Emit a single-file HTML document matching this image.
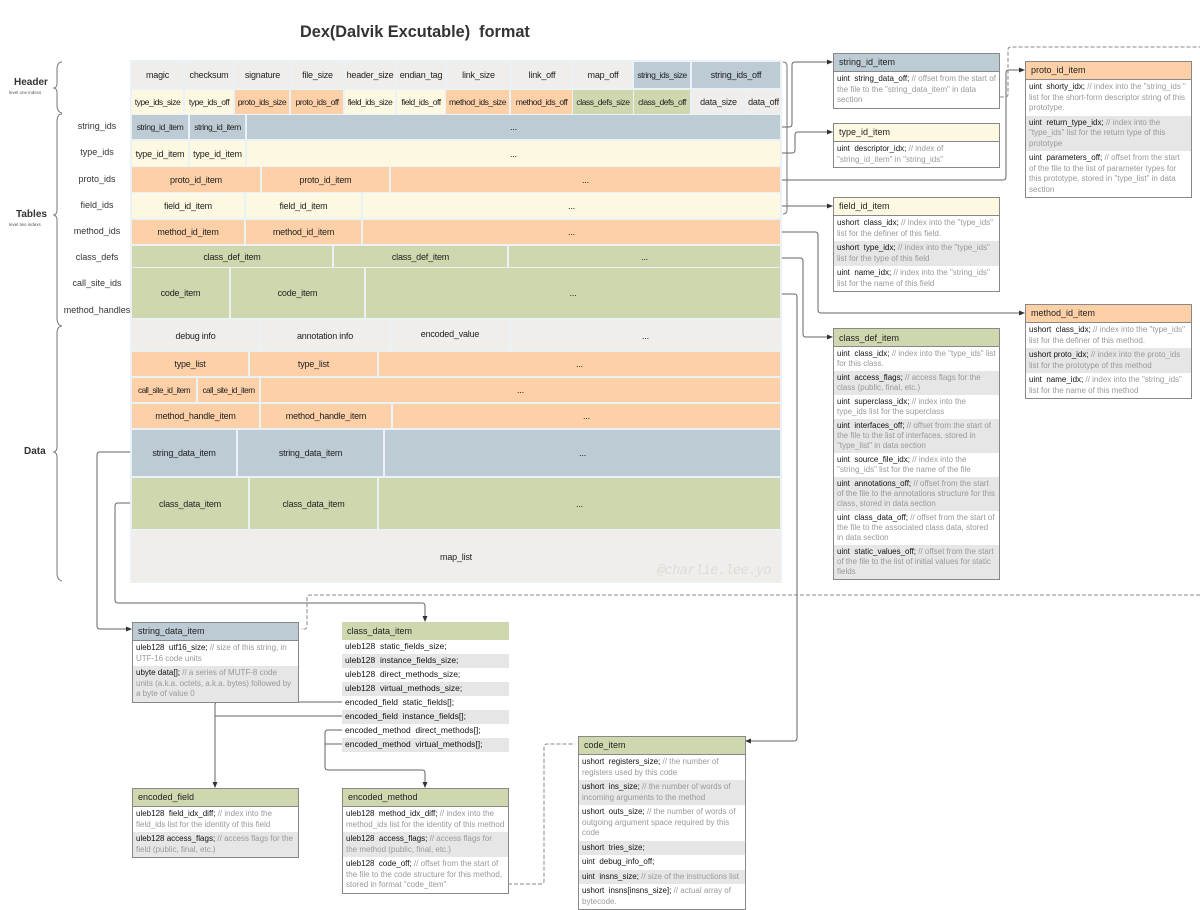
<!DOCTYPE html>
<html><head><meta charset="utf-8"><style>
*{box-sizing:border-box;margin:0;padding:0}
body{width:1200px;height:909px;background:#fff;position:relative;overflow:hidden;font-family:"Liberation Sans",sans-serif;color:#222}
.c{position:absolute;display:flex;align-items:center;justify-content:center;font-size:9px;white-space:nowrap;overflow:hidden;letter-spacing:-0.2px}
.n{letter-spacing:-0.5px;font-size:8.6px}
.g{background:#efeeea}.b{background:#bccbd4}.y{background:#fdf8e1}.p{background:#fdd0a8}.v{background:#cfd7ae}
.l{position:absolute;font-size:9px;color:#333;width:80px;text-align:center}
.box{position:absolute;border:1px solid #888;background:#fff;font-size:8px;line-height:10.5px}
.box .h{height:18px;padding-left:5px;font-size:9px;display:flex;align-items:center;border-bottom:1px solid #888;color:#222}
.box .r{padding:2px 3px;color:#999}
.box .r b{font-weight:normal;color:#111}
.box .s{padding:1px 3px;color:#111;font-size:8.5px;height:14px}
</style></head><body>
<div style="position:absolute;left:300px;top:23px;font-size:16.3px;font-weight:bold;color:#333">Dex(Dalvik Excutable)&nbsp; format</div>

<div style="position:absolute;left:14px;top:77px;font-size:10px;font-weight:bold;color:#333">Header</div>
<div style="position:absolute;left:9px;top:90px;font-size:4.5px;color:#555">level one indexs</div>
<div style="position:absolute;left:16px;top:209px;font-size:10px;font-weight:bold;color:#333">Tables</div>
<div style="position:absolute;left:9px;top:222px;font-size:4.5px;color:#555">level two indexs</div>
<div style="position:absolute;left:24px;top:446px;font-size:10px;font-weight:bold;color:#333">Data</div>

<svg style="position:absolute;left:0;top:0" width="1200" height="909">
<g fill="none" stroke="#777" stroke-width="1">
<path d="M62 62 Q57 62 57 70 V84 Q57 87 54 88 Q57 89 57 92 V105 Q57 112 62 113"/>
<path d="M62 114 Q57 114 57 122 V210 Q57 214 54 215 Q57 216 57 220 V318 Q57 325 62 326"/>
<path d="M62 326 Q57 326 57 334 V447 Q57 451 54 452 Q57 453 57 457 V573 Q57 580 62 581"/>
<path d="M783 62 Q787 62 787 66 V210 Q787 214 783 214"/>
</g>
<g fill="none" stroke="#666" stroke-width="1">
<path d="M780 127 H789 Q792 127 792 124 V65 Q792 62 795 62 H830"/>
<path d="M780 153 H792 Q795 153 795 150 V135 Q795 132 798 132 H830"/>
<path d="M780 180 H1003 Q1006 180 1006 177 V73 Q1006 70 1009 70 H1022"/>
<path d="M780 206 H830"/>
<path d="M780 232 H815 Q818 232 818 235 V310 Q818 313 821 313 H1022"/>
<path d="M780 258 H800 Q803 258 803 261 V334 Q803 337 806 337 H830"/>
<path d="M780 294 H794 Q797 294 797 297 V738 Q797 741 794 741 H748"/>
<path d="M132 452 H100 Q97 452 97 455 V626 Q97 629 100 629 H129"/>
<path d="M132 503 H118 Q115 503 115 506 V600 Q115 603 118 603 H422 Q425 603 425 606 V617"/>
<path d="M342 702 H218 Q215 702 215 705 V784"/>
<path d="M342 716 H215"/>
<path d="M342 730 H328 Q325 730 325 733 V767 Q325 770 328 770 H422 Q425 770 425 773 V784"/>
<path d="M342 744 H325"/>
</g>
<g fill="none" stroke="#888" stroke-dasharray="4 2">
<path d="M1000 97 H1005 Q1008 97 1008 94 V50 Q1008 47 1011 47 H1200"/>
<path d="M1200 595 H310 Q307 595 307 598 V626 Q307 629 304 629 H301"/>
<path d="M508 884 H541 Q544 884 544 881 V747 Q544 744 547 744 H575"/>
</g>
<g fill="#333">
<path d="M833 62 l-6 -2.5 v5z"/><path d="M833 132 l-6 -2.5 v5z"/><path d="M1025 70 l-6 -2.5 v5z"/>
<path d="M833 206 l-6 -2.5 v5z"/><path d="M1025 313 l-6 -2.5 v5z"/><path d="M833 337 l-6 -2.5 v5z"/>
<path d="M745 741 l6 -2.5 v5z"/><path d="M132 629 l-6 -2.5 v5z"/>
<path d="M425 622 l-2.5 -6 h5z"/><path d="M215 788 l-2.5 -6 h5z"/><path d="M425 788 l-2.5 -6 h5z"/>
</g>
</svg>

<div class="l" style="left:57px;top:121px">string_ids</div>
<div class="l" style="left:57px;top:147px">type_ids</div>
<div class="l" style="left:57px;top:174px">proto_ids</div>
<div class="l" style="left:57px;top:200px">field_ids</div>
<div class="l" style="left:57px;top:226px">method_ids</div>
<div class="l" style="left:57px;top:252px">class_defs</div>
<div class="l" style="left:57px;top:278px">call_site_ids</div>
<div class="l" style="left:57px;top:305px">method_handles</div>

<div style="position:absolute;left:130px;top:60px;width:652px;height:523px;background:#eaf1f7"></div>
<div class="c g" style="left:132px;top:62px;width:51px;height:26px">magic</div>
<div class="c g" style="left:185px;top:62px;width:48px;height:26px">checksum</div>
<div class="c g" style="left:235px;top:62px;width:55px;height:26px">signature</div>
<div class="c g" style="left:292px;top:62px;width:51px;height:26px">file_size</div>
<div class="c g" style="left:345px;top:62px;width:50px;height:26px">header_size</div>
<div class="c g" style="left:397px;top:62px;width:48px;height:26px">endian_tag</div>
<div class="c g" style="left:447px;top:62px;width:63px;height:26px">link_size</div>
<div class="c g" style="left:512px;top:62px;width:60px;height:26px">link_off</div>
<div class="c g" style="left:574px;top:62px;width:58px;height:26px">map_off</div>
<div class="c b n" style="left:634px;top:62px;width:56px;height:26px">string_ids_size</div>
<div class="c b" style="left:692px;top:62px;width:88px;height:26px">string_ids_off</div>
<div class="c y n" style="left:132px;top:90px;width:51px;height:24px">type_ids_size</div>
<div class="c y n" style="left:185px;top:90px;width:48px;height:24px">type_ids_off</div>
<div class="c p n" style="left:235px;top:90px;width:54px;height:24px">proto_ids_size</div>
<div class="c p n" style="left:291px;top:90px;width:52px;height:24px">proto_ids_off</div>
<div class="c y n" style="left:345px;top:90px;width:50px;height:24px">field_ids_size</div>
<div class="c y n" style="left:397px;top:90px;width:48px;height:24px">field_ids_off</div>
<div class="c p n" style="left:446px;top:90px;width:63px;height:24px">method_ids_size</div>
<div class="c p n" style="left:511px;top:90px;width:61px;height:24px">method_ids_off</div>
<div class="c v n" style="left:573px;top:90px;width:60px;height:24px">class_defs_size</div>
<div class="c v n" style="left:634px;top:90px;width:56px;height:24px">class_defs_off</div>
<div class="c g" style="left:692px;top:90px;width:53px;height:24px">data_size</div>
<div class="c g" style="left:747px;top:90px;width:33px;height:24px">data_off</div>
<div class="c b n" style="left:132px;top:115px;width:56px;height:24px">string_id_item</div>
<div class="c b n" style="left:190px;top:115px;width:55px;height:24px">string_id_item</div>
<div class="c b" style="left:247px;top:115px;width:533px;height:24px">...</div>
<div class="c y" style="left:132px;top:141px;width:56px;height:25px">type_id_item</div>
<div class="c y" style="left:190px;top:141px;width:55px;height:25px">type_id_item</div>
<div class="c y" style="left:247px;top:141px;width:533px;height:25px">...</div>
<div class="c p" style="left:132px;top:167px;width:128px;height:25px">proto_id_item</div>
<div class="c p" style="left:262px;top:167px;width:127px;height:25px">proto_id_item</div>
<div class="c p" style="left:391px;top:167px;width:389px;height:25px">...</div>
<div class="c y" style="left:132px;top:193px;width:112px;height:25px">field_id_item</div>
<div class="c y" style="left:246px;top:193px;width:115px;height:25px">field_id_item</div>
<div class="c y" style="left:363px;top:193px;width:417px;height:25px">...</div>
<div class="c p" style="left:132px;top:220px;width:112px;height:24px">method_id_item</div>
<div class="c p" style="left:246px;top:220px;width:115px;height:24px">method_id_item</div>
<div class="c p" style="left:363px;top:220px;width:417px;height:24px">...</div>
<div class="c v" style="left:132px;top:246px;width:200px;height:21px">class_def_item</div>
<div class="c v" style="left:334px;top:246px;width:173px;height:21px">class_def_item</div>
<div class="c v" style="left:509px;top:246px;width:271px;height:21px">...</div>
<div class="c v" style="left:132px;top:268px;width:97px;height:50px">code_item</div>
<div class="c v" style="left:231px;top:268px;width:133px;height:50px">code_item</div>
<div class="c v" style="left:366px;top:268px;width:414px;height:50px">...</div>
<div class="c g" style="left:132px;top:320px;width:127px;height:31px">debug info</div>
<div class="c g" style="left:261px;top:320px;width:128px;height:31px">annotation info</div>
<div class="c g" style="left:391px;top:320px;width:118px;height:31px;align-items:flex-start;padding-top:9px">encoded_value</div>
<div class="c g" style="left:511px;top:320px;width:269px;height:31px">...</div>
<div class="c p" style="left:132px;top:352px;width:116px;height:24px">type_list</div>
<div class="c p" style="left:250px;top:352px;width:127px;height:24px">type_list</div>
<div class="c p" style="left:379px;top:352px;width:401px;height:24px">...</div>
<div class="c p n" style="left:132px;top:378px;width:64px;height:24px;font-size:8.2px">call_site_id_item</div>
<div class="c p n" style="left:198px;top:378px;width:61px;height:24px;font-size:8.2px">call_site_id_item</div>
<div class="c p" style="left:261px;top:378px;width:519px;height:24px">...</div>
<div class="c p" style="left:132px;top:404px;width:127px;height:24px">method_handle_item</div>
<div class="c p" style="left:261px;top:404px;width:130px;height:24px">method_handle_item</div>
<div class="c p" style="left:393px;top:404px;width:387px;height:24px">...</div>
<div class="c b" style="left:132px;top:430px;width:104px;height:46px">string_data_item</div>
<div class="c b" style="left:238px;top:430px;width:145px;height:46px">string_data_item</div>
<div class="c b" style="left:385px;top:430px;width:395px;height:46px">...</div>
<div class="c v" style="left:132px;top:478px;width:116px;height:51px">class_data_item</div>
<div class="c v" style="left:250px;top:478px;width:127px;height:51px">class_data_item</div>
<div class="c v" style="left:379px;top:478px;width:401px;height:51px">...</div>
<div class="c g" style="left:132px;top:531px;width:648px;height:51px">map_list</div>
<div style="position:absolute;left:657px;top:564px;font-family:'Liberation Mono',monospace;font-style:italic;font-size:13.5px;letter-spacing:-0.5px;color:#dcdcd8">@charlie.lee.yo</div>

<div class="box" style="left:833px;top:53px;width:167px">
<div class="h b">string_id_item</div>
<div class="r"><b>uint&nbsp; string_data_off;</b> // offset from the start of the file to the "string_data_item" in data section</div></div>

<div class="box" style="left:833px;top:123px;width:167px">
<div class="h y">type_id_item</div>
<div class="r"><b>uint&nbsp; descriptor_idx;</b> // index of "string_id_item" in "string_ids"</div></div>

<div class="box" style="left:1025px;top:61px;width:167px">
<div class="h p">proto_id_item</div>
<div class="r"><b>uint&nbsp; shorty_idx;</b> // index into the "string_ids " list for the short-form descriptor string of this prototype.</div>
<div class="r" style="background:#e6e6e6"><b>uint&nbsp; return_type_idx;</b> // index into the "type_ids" list for the return type of this prototype</div>
<div class="r"><b>uint&nbsp; parameters_off;</b> // offset from the start of the file to the list of parameter types for this prototype, stored in "type_list" in data section</div></div>

<div class="box" style="left:833px;top:197px;width:167px">
<div class="h y">field_id_item</div>
<div class="r"><b>ushort&nbsp; class_idx;</b> // index into the "type_ids" list for the definer of this field.</div>
<div class="r" style="background:#e6e6e6"><b>ushort&nbsp; type_idx;</b> // index into the "type_ids" list for the type of this field</div>
<div class="r"><b>uint&nbsp; name_idx;</b> // index into the "string_ids" list for the name of this field</div></div>

<div class="box" style="left:1025px;top:304px;width:167px">
<div class="h p">method_id_item</div>
<div class="r"><b>ushort&nbsp; class_idx;</b> // index into the "type_ids" list for the definer of this method.</div>
<div class="r" style="background:#e6e6e6"><b>ushort proto_idx;</b> // index into the proto_ids list for the prototype of this method</div>
<div class="r"><b>uint&nbsp; name_idx;</b> // index into the "string_ids" list for the name of this method</div></div>

<div class="box" style="left:833px;top:328px;width:167px;line-height:10px">
<div class="h v">class_def_item</div>
<div class="r"><b>uint&nbsp; class_idx;</b> // index into the "type_ids" list for this class.</div>
<div class="r" style="background:#e6e6e6"><b>uint&nbsp; access_flags;</b> // access flags for the class (public, final, etc.)</div>
<div class="r"><b>uint&nbsp; superclass_idx;</b> // index into the type_ids list for the superclass</div>
<div class="r" style="background:#e6e6e6"><b>uint&nbsp; interfaces_off;</b> // offset from the start of the file to the list of interfaces, stored in "type_list" in data section</div>
<div class="r"><b>uint&nbsp; source_file_idx;</b> // index into the "string_ids" list for the name of the file</div>
<div class="r" style="background:#e6e6e6"><b>uint&nbsp; annotations_off;</b> // offset from the start of the file to the annotations structure for this class, stored in data section</div>
<div class="r"><b>uint&nbsp; class_data_off;</b> // offset from the start of the file to the associated class data, stored in data section</div>
<div class="r" style="background:#e6e6e6"><b>uint&nbsp; static_values_off;</b> // offset from the start of the file to the list of initial values for static fields</div></div>

<div class="box" style="left:132px;top:622px;width:167px">
<div class="h b">string_data_item</div>
<div class="r"><b>uleb128&nbsp; utf16_size;</b> // size of this string, in UTF-16 code units</div>
<div class="r" style="background:#e6e6e6"><b>ubyte data[];</b> // a series of MUTF-8 code units (a.k.a. octets, a.k.a. bytes) followed by a byte of value 0</div></div>

<div class="box" style="left:342px;top:622px;width:167px;border:none">
<div class="h v" style="border:none">class_data_item</div>
<div class="s">uleb128&nbsp; static_fields_size;</div>
<div class="s" style="background:#e6e6e6">uleb128&nbsp; instance_fields_size;</div>
<div class="s">uleb128&nbsp; direct_methods_size;</div>
<div class="s" style="background:#e6e6e6">uleb128&nbsp; virtual_methods_size;</div>
<div class="s">encoded_field&nbsp; static_fields[];</div>
<div class="s" style="background:#e6e6e6">encoded_field&nbsp; instance_fields[];</div>
<div class="s">encoded_method&nbsp; direct_methods[];</div>
<div class="s" style="background:#e6e6e6">encoded_method&nbsp; virtual_methods[];</div></div>

<div class="box" style="left:132px;top:788px;width:167px">
<div class="h v">encoded_field</div>
<div class="r"><b>uleb128&nbsp; field_idx_diff;</b> // index into the field_ids list for the identity of this field</div>
<div class="r" style="background:#e6e6e6"><b>uleb128 access_flags;</b> // access flags for the field (public, final, etc.)</div></div>

<div class="box" style="left:342px;top:788px;width:167px">
<div class="h v">encoded_method</div>
<div class="r"><b>uleb128&nbsp; method_idx_diff;</b> // index into the method_ids list for the identity of this method</div>
<div class="r" style="background:#e6e6e6"><b>uleb128&nbsp; access_flags;</b> // access flags for the method (public, final, etc.)</div>
<div class="r"><b>uleb128&nbsp; code_off;</b> // offset from the start of the file to the code structure for this method, stored in format "code_item"</div></div>

<div class="box" style="left:578px;top:736px;width:168px">
<div class="h v">code_item</div>
<div class="r"><b>ushort&nbsp; registers_size;</b> // the number of registers used by this code</div>
<div class="r" style="background:#e6e6e6"><b>ushort&nbsp; ins_size;</b> // the number of words of incoming arguments to the method</div>
<div class="r"><b>ushort&nbsp; outs_size;</b> // the number of words of outgoing argument space required by this code</div>
<div class="r" style="background:#e6e6e6"><b>ushort&nbsp; tries_size;</b></div>
<div class="r"><b>uint&nbsp; debug_info_off;</b></div>
<div class="r" style="background:#e6e6e6"><b>uint&nbsp; insns_size;</b> // size of the instructions list</div>
<div class="r"><b>ushort&nbsp; insns[insns_size];</b> // actual array of bytecode.</div></div>
</body></html>
